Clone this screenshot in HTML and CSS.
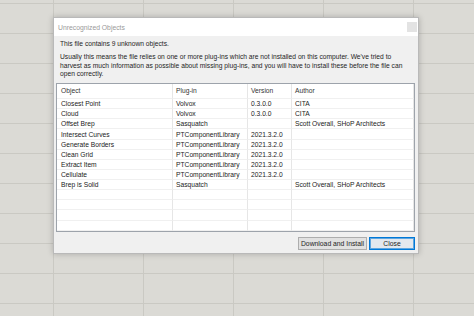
FILE: index.html
```html
<!DOCTYPE html>
<html>
<head>
<meta charset="utf-8">
<link rel="stylesheet" href="styles.css">
</head>
<body>
<div class="dialog">
  <div class="titlebar">
    <span class="title">Unrecognized Objects</span>
    <span class="xbtn"></span>
  </div>
  <div class="content">
    <p class="lead">This file contains 9 unknown objects.</p>
    <p class="desc">Usually this means the file relies on one or more plug-ins which are not installed on this computer. We've tried to<br>harvest as much information as possible about missing plug-ins, and you will have to install these before the file can<br>open correctly.</p>
    <div class="list">
      <div class="row head"><div class="cell">Object</div><div class="cell">Plug-in</div><div class="cell">Version</div><div class="cell">Author</div><div class="cell"></div></div>
      <div class="row"><div class="cell">Closest Point</div><div class="cell">Volvox</div><div class="cell">0.3.0.0</div><div class="cell">CITA</div><div class="cell"></div></div>
      <div class="row"><div class="cell">Cloud</div><div class="cell">Volvox</div><div class="cell">0.3.0.0</div><div class="cell">CITA</div><div class="cell"></div></div>
      <div class="row"><div class="cell">Offset Brep</div><div class="cell">Sasquatch</div><div class="cell"></div><div class="cell">Scott Overall, SHoP Architects</div><div class="cell"></div></div>
      <div class="row"><div class="cell">Intersect Curves</div><div class="cell">PTComponentLibrary</div><div class="cell">2021.3.2.0</div><div class="cell"></div><div class="cell"></div></div>
      <div class="row"><div class="cell">Generate Borders</div><div class="cell">PTComponentLibrary</div><div class="cell">2021.3.2.0</div><div class="cell"></div><div class="cell"></div></div>
      <div class="row"><div class="cell">Clean Grid</div><div class="cell">PTComponentLibrary</div><div class="cell">2021.3.2.0</div><div class="cell"></div><div class="cell"></div></div>
      <div class="row"><div class="cell">Extract Item</div><div class="cell">PTComponentLibrary</div><div class="cell">2021.3.2.0</div><div class="cell"></div><div class="cell"></div></div>
      <div class="row"><div class="cell">Cellulate</div><div class="cell">PTComponentLibrary</div><div class="cell">2021.3.2.0</div><div class="cell"></div><div class="cell"></div></div>
      <div class="row"><div class="cell">Brep is Solid</div><div class="cell">Sasquatch</div><div class="cell"></div><div class="cell">Scott Overall, SHoP Architects</div><div class="cell"></div></div>
      <div class="row"><div class="cell"></div><div class="cell"></div><div class="cell"></div><div class="cell"></div><div class="cell"></div></div>
      <div class="row"><div class="cell"></div><div class="cell"></div><div class="cell"></div><div class="cell"></div><div class="cell"></div></div>
      <div class="row"><div class="cell"></div><div class="cell"></div><div class="cell"></div><div class="cell"></div><div class="cell"></div></div>
      <div class="row"><div class="cell"></div><div class="cell"></div><div class="cell"></div><div class="cell"></div><div class="cell"></div></div>
      <div class="row"><div class="cell"></div><div class="cell"></div><div class="cell"></div><div class="cell"></div><div class="cell"></div></div>
    </div>
    <div class="buttons">
      <button class="btn">Download and Install</button>
      <button class="btn primary">Close</button>
    </div>
  </div>
</div>
</body>
</html>
```

FILE: styles.css
```css
html, body {
  margin: 0;
  padding: 0;
}
body {
  width: 474px;
  height: 316px;
  overflow: hidden;
  background-color: #dbdad5;
  background-image:
    linear-gradient(to right, #cac9c3 1px, transparent 1px),
    linear-gradient(to bottom, #cac9c3 1px, transparent 1px);
  background-size: 90px 30px;
  background-position: 53px 3px;
  font-family: "Liberation Sans", Arial, sans-serif;
  font-size: 6.7px;
  color: #1e1e1e;
  padding-top: 17px;
  box-sizing: border-box;
}
.dialog {
  margin-left: 53px;
  width: 366px;
  height: 237px;
  background: #f0f0f0;
  border: 1px solid #b9b9b9;
  box-sizing: border-box;
  box-shadow: 0 0 6px rgba(0, 0, 0, 0.22);
  display: flex;
  flex-direction: column;
}
.titlebar {
  height: 18px;
  background: #ffffff;
  display: flex;
  align-items: center;
  justify-content: space-between;
  padding: 0 1px 0 4px;
  flex: none;
}
.title {
  color: #9a9a9a;
  font-size: 6.8px;
}
.xbtn {
  width: 10px;
  height: 10px;
  background: #e3e3e3;
  margin-bottom: 1px;
}
.content {
  padding: 3px 3px 3px 2px;
  display: flex;
  flex-direction: column;
  flex: 1;
}
.lead {
  margin: 0 0 5px 4px;
  line-height: 9px;
  white-space: nowrap;
}
.desc {
  margin: 0 0 4px 4px;
  line-height: 8.7px;
  white-space: nowrap;
}
.list {
  height: 149px;
  background: #ffffff;
  border: 1px solid #9da3ab;
  box-sizing: border-box;
  overflow: hidden;
  flex: none;
}
.row {
  display: grid;
  grid-template-columns: 116px 75px 44px 122px 1fr;
  height: 10.125px;
}
.row.head {
  height: 15px;
}
.cell {
  border-right: 1px solid #e6e6e6;
  border-bottom: 1px solid #f0f0f0;
  padding-left: 3px;
  display: flex;
  align-items: center;
  white-space: nowrap;
  overflow: hidden;
  box-sizing: border-box;
  color: #222;
}
.head .cell {
  padding-bottom: 1px;
  color: #333;
}
.row .cell:first-child {
  padding-left: 4px;
}
.row .cell:last-child {
  border-right: none;
}
.buttons {
  display: flex;
  justify-content: flex-end;
  gap: 2px;
  margin-top: 5px;
}
.btn {
  font-family: "Liberation Sans", Arial, sans-serif;
  font-size: 6.8px;
  color: #1e1e1e;
  height: 13px;
  padding: 0;
  margin: 0;
  background: #e1e1e1;
  border: 1px solid #adadad;
  box-sizing: border-box;
  line-height: 11px;
}
.btn:first-child {
  width: 69px;
}
.btn.primary {
  width: 46px;
  border: 1px solid #0078d7;
  box-shadow: inset 0 0 0 1px #5ea6e0;
  background: #e3e8ee;
}
```
